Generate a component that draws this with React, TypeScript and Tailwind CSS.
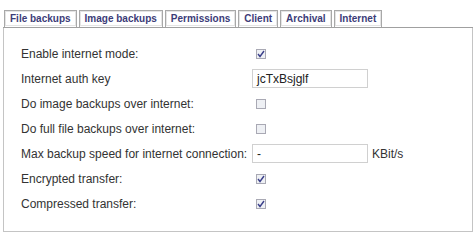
import React from "react";

const tabs = ["File backups", "Image backups", "Permissions", "Client", "Archival", "Internet"];

type Row =
  | { label: string; kind: "check"; checked: boolean }
  | { label: string; kind: "input"; value: string; unit?: string };

const rows: Row[] = [
  { label: "Enable internet mode:", kind: "check", checked: true },
  { label: "Internet auth key", kind: "input", value: "jcTxBsjglf" },
  { label: "Do image backups over internet:", kind: "check", checked: false },
  { label: "Do full file backups over internet:", kind: "check", checked: false },
  { label: "Max backup speed for internet connection:", kind: "input", value: "-", unit: "KBit/s" },
  { label: "Encrypted transfer:", kind: "check", checked: true },
  { label: "Compressed transfer:", kind: "check", checked: true },
];

const CheckBox = ({ checked }: { checked: boolean }) => (
  <div className="ml-[4px] w-[10px] h-[10px] border border-[#a9a9b4] bg-[#eef0f4] flex items-center justify-center">
    {checked && (
      <svg width="8" height="8" viewBox="0 0 8 8">
        <path d="M1 4 L3 6.5 L7 1" fill="none" stroke="#3a3f8a" strokeWidth="1.4" />
      </svg>
    )}
  </div>
);

export default function App() {
  return (
    <div
      className="w-[474px] h-[245px] bg-white pt-[10px] pl-[3px] pr-[1px]"
      style={{ fontFamily: "'Liberation Sans', Arial, sans-serif" }}
    >
      <div className="flex gap-[2px] pl-[1px] border-b border-[#a0a0a0]">
        {tabs.map((t) => (
          <div
            key={t}
            className="h-[17px] px-[5px] border border-b-0 border-[#a8a8a8] outline outline-1 outline-[#e4e4e4] -outline-offset-2 flex items-center text-[10px] font-bold text-[#3c3c78] leading-none"
          >
            {t}
          </div>
        ))}
      </div>
      <div className="h-[204px] border border-t-0 border-[#c4c4c4] pt-[13px] pl-[17px]">
        {rows.map((r) => (
          <div key={r.label} className="h-[25px] flex items-center text-[12px] text-[#333]">
            <div className="w-[231px] shrink-0">{r.label}</div>
            {r.kind === "check" ? (
              <CheckBox checked={r.checked} />
            ) : (
              <div className="flex items-center">
                <div className="w-[116px] h-[19px] border border-[#d0d0d0] flex items-center px-[4px] text-[12px] text-[#222]">
                  {r.value}
                </div>
                {r.unit && <span className="ml-[4px]">{r.unit}</span>}
              </div>
            )}
          </div>
        ))}
      </div>
    </div>
  );
}
